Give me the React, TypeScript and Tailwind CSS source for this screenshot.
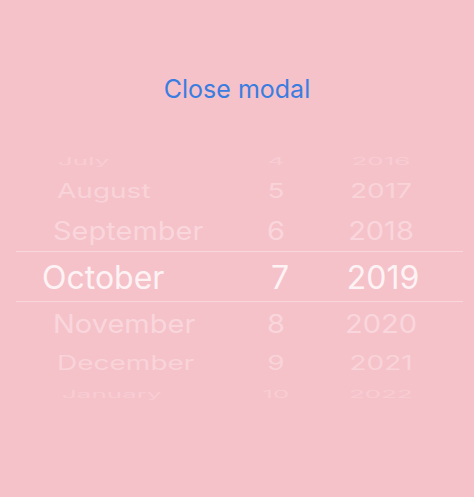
import React from 'react';

type Row = {
  month: string;
  day: string;
  year: string;
  // per-row wheel look: size, squash, fade and month indent
  text: string;
  squash: string;
  fade: string;
  indent: string;
  height: string;
};

const rows: Row[] = [
  { month: 'July', day: '4', year: '2016', text: 'text-[26px]', squash: 'scale-y-[0.4]', fade: 'text-white/20', indent: 'pl-[42px]', height: 'h-[24px]' },
  { month: 'August', day: '5', year: '2017', text: 'text-[28px]', squash: 'scale-y-[0.72]', fade: 'text-white/30', indent: 'pl-[41px]', height: 'h-[38px]' },
  { month: 'September', day: '6', year: '2018', text: 'text-[29px]', squash: 'scale-y-[0.88]', fade: 'text-white/35', indent: 'pl-[37px]', height: 'h-[41px]' },
];

const after: Row[] = [
  { month: 'November', day: '8', year: '2020', text: 'text-[29px]', squash: 'scale-y-[0.88]', fade: 'text-white/35', indent: 'pl-[37px]', height: 'h-[42px]' },
  { month: 'December', day: '9', year: '2021', text: 'text-[28px]', squash: 'scale-y-[0.7]', fade: 'text-white/30', indent: 'pl-[41px]', height: 'h-[37px]' },
  { month: 'January', day: '10', year: '2022', text: 'text-[26px]', squash: 'scale-y-[0.4]', fade: 'text-white/20', indent: 'pl-[46px]', height: 'h-[24px]' },
];

function WheelRow({ row }: { row: Row }) {
  return (
    <div className={`grid grid-cols-[220px_80px_130px] items-center ${row.height} ${row.text} ${row.fade} leading-none`}>
      <span className={`${row.indent} origin-center ${row.squash}`}>{row.month}</span>
      <span className={`text-center ${row.squash}`}>{row.day}</span>
      <span className={`text-center ${row.squash}`}>{row.year}</span>
    </div>
  );
}

export default function App() {
  return (
    <div className="h-[497px] w-full bg-[#f6c2ca] font-['Inter',sans-serif] overflow-hidden">
      <div className="pt-[74px] flex justify-center">
        <button className="text-[25px] leading-[30px] text-[#3a7de0]">Close modal</button>
      </div>

      {/* date wheel */}
      <div className="mt-[44px] ml-4 mr-[11px]">
        {rows.map((r) => (
          <WheelRow key={r.month} row={r} />
        ))}
        <div className="grid grid-cols-[220px_80px_130px] items-center h-[51px] border-y border-white/35 text-[32px] leading-none text-[#fdf3f5]">
          <span className="pl-[26px] pt-[2px]">October</span>
          <span className="text-center pl-2 pt-[2px]">7</span>
          <span className="text-center pl-1 pt-[2px]">2019</span>
        </div>
        {after.map((r) => (
          <WheelRow key={r.month} row={r} />
        ))}
      </div>
    </div>
  );
}
